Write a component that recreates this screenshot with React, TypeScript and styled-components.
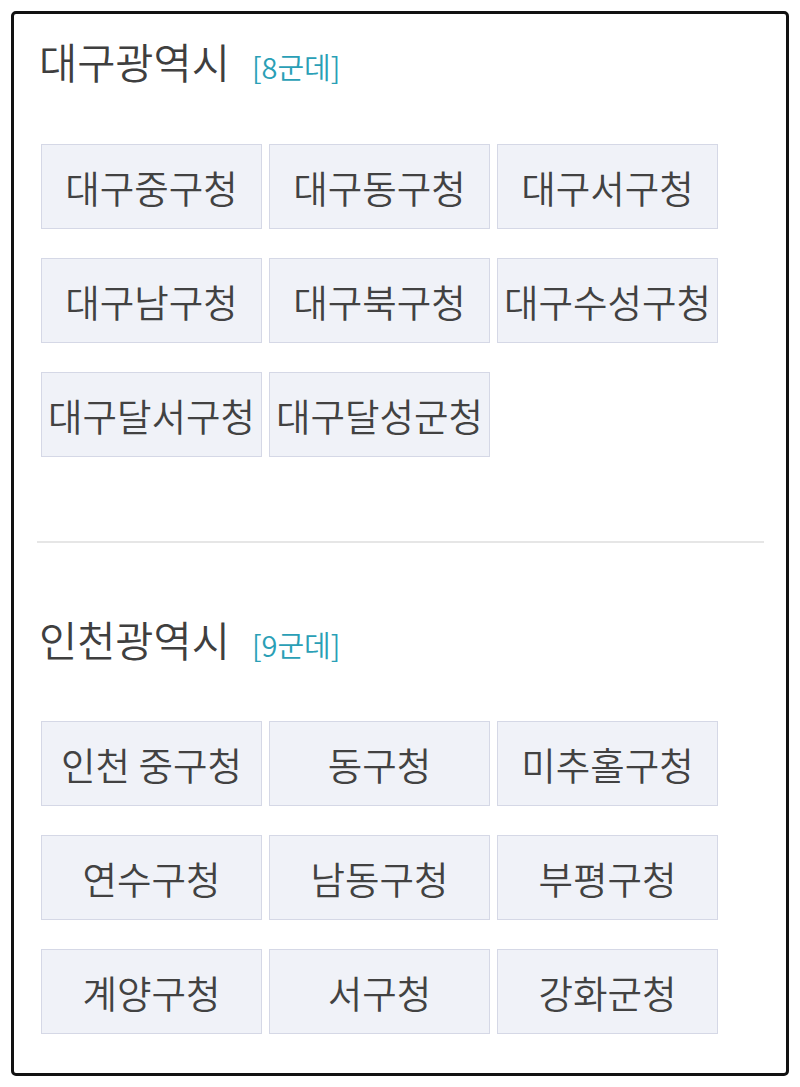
import React from 'react';
import styled, { createGlobalStyle } from 'styled-components';

const GlobalStyle = createGlobalStyle`
    html, body {
        margin: 0;
        padding: 0;
        background: #ffffff;
    }
    body {
        font-family: "Noto Sans CJK KR", "Noto Sans", sans-serif;
    }
`;

const StyledFrame = styled.div`
    box-sizing: border-box;
    margin: 11px;
    height: 1065px;
    border: 3px solid #111111;
    border-radius: 5px;
    padding: 0 22px 0 23px;
    background: #ffffff;
`;

const StyledSection = styled.section<{ $top: number }>`
    padding-top: ${(p) => p.$top}px;
`;

const StyledTitle = styled.h2`
    margin: 0 0 0 2px;
    height: 50px;
    display: flex;
    flex-direction: row;
    align-items: baseline;
    gap: 22px;
    font-size: 41.5px;
    line-height: 50px;
    font-weight: 350;
    color: #3f3f3f;
`;

const StyledCount = styled.span`
    font-size: 29px;
    color: #2a9fb6;
`;

const StyledGrid = styled.div<{ $top: number }>`
    margin: ${(p) => p.$top}px 0 0 4px;
    display: grid;
    grid-template-columns: repeat(3, 221px);
    grid-auto-rows: 85px;
    column-gap: 7px;
    row-gap: 29px;
`;

const StyledOffice = styled.a`
    box-sizing: border-box;
    display: flex;
    align-items: center;
    justify-content: center;
    padding-bottom: 1px;
    background: #f0f2f8;
    border: 1px solid #d5d8e6;
    font-size: 37.5px;
    font-weight: 350;
    color: #424242;
    white-space: nowrap;
    cursor: pointer;
`;

const StyledDivider = styled.hr`
    margin: 84px 0 0 0;
    border: none;
    height: 2px;
    background: #e6e6e6;
`;

type RegionProps = {
    name: string;
    count: string;
    offices: string[];
    top: number;
    gridTop: number;
}

const Region = (props: RegionProps) => {
    return (
        <StyledSection $top={props.top}>
            <StyledTitle>
                {props.name}
                <StyledCount>{props.count}</StyledCount>
            </StyledTitle>
            <StyledGrid $top={props.gridTop}>
                {props.offices.map((o) => (
                    <StyledOffice key={o}>{o}</StyledOffice>
                ))}
            </StyledGrid>
        </StyledSection>
    )
}

const daegu = ['대구중구청', '대구동구청', '대구서구청', '대구남구청', '대구북구청', '대구수성구청', '대구달서구청', '대구달성군청'];
const incheon = ['인천 중구청', '동구청', '미추홀구청', '연수구청', '남동구청', '부평구청', '계양구청', '서구청', '강화군청'];

export default function App() {
    return (
        <>
            <GlobalStyle />
            <StyledFrame>
                <Region name="대구광역시" count="[8군데]" offices={daegu} top={22} gridTop={58} />
                <StyledDivider />
                <Region name="인천광역시" count="[9군데]" offices={incheon} top={71} gridTop={57} />
            </StyledFrame>
        </>
    )
}
